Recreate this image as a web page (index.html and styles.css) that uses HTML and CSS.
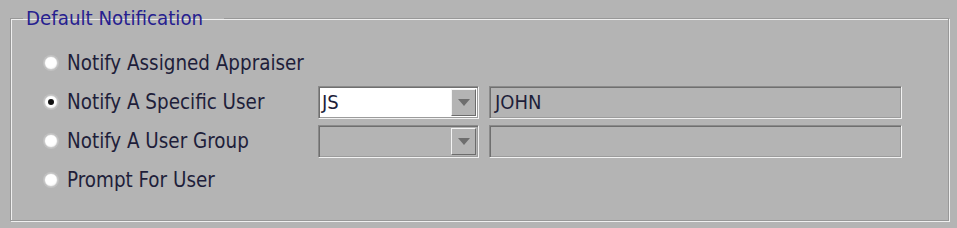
FILE: index.html
```html
<!DOCTYPE html>
<html lang="en">
<head>
    <meta charset="UTF-8">
    <title>Default Notification</title>
    <link rel="stylesheet" href="styles.css">
</head>
<body>
    <fieldset class="group">
        <legend>Default Notification</legend>
        <div class="rows">
            <label class="option">
                <span class="radio"></span>
                <span>Notify Assigned Appraiser</span>
            </label>
            <div></div>
            <div></div>

            <label class="option">
                <span class="radio checked"></span>
                <span>Notify A Specific User</span>
            </label>
            <div class="combo">
                <span class="combo-text">JS</span>
                <span class="combo-btn"><span class="arrow"></span></span>
            </div>
            <div class="field">JOHN</div>

            <label class="option">
                <span class="radio"></span>
                <span>Notify A User Group</span>
            </label>
            <div class="combo disabled">
                <span class="combo-text"></span>
                <span class="combo-btn"><span class="arrow"></span></span>
            </div>
            <div class="field"></div>

            <label class="option">
                <span class="radio"></span>
                <span>Prompt For User</span>
            </label>
            <div></div>
            <div></div>
        </div>
    </fieldset>
</body>
</html>
```

FILE: styles.css
```css
body {
    margin: 0;
    padding: 0;
    background: #b4b4b4;
    font-family: 'DejaVu Sans Condensed', 'DejaVu Sans', sans-serif;
    font-size: 20px;
    color: #1e1e3a;
    height: 228px;
    overflow: hidden;
}
.group {
    margin: 8px 8px 0 10px;
    padding: 16px 0 14px 0;
    height: 181px;
    border: 1px solid #989898;
    box-shadow: inset 1px 1px 0 #efefef, 1px 1px 0 #efefef;
}
.group legend {
    margin-left: 12px;
    padding: 0 21px 0 3px;
    color: #26208f;
    font-size: 20.3px;
    line-height: 20px;
}
.rows {
    display: grid;
    grid-template-columns: 264px 161px 413px;
    grid-auto-rows: 38px;
    row-gap: 1px;
    column-gap: 10px;
    align-items: center;
    padding-left: 33px;
}
.option {
    display: flex;
    align-items: center;
    gap: 9px;
    font-size: 20.4px;
}
.radio {
    width: 12px;
    height: 12px;
    border-radius: 50%;
    border: 1px solid #cfcfcf;
    background: radial-gradient(circle at 45% 40%, #ffffff 55%, #e4e4e4 100%);
    box-shadow: 0 0 0 1px #c2c2c2;
    position: relative;
}
.radio.checked::after {
    content: "";
    position: absolute;
    left: 3px;
    top: 3px;
    width: 6px;
    height: 6px;
    border-radius: 50%;
    background: #111;
}
.combo,
.field {
    box-sizing: border-box;
    height: 33px;
    border: 1px solid;
    border-color: #8a8a8a #f2f2f2 #f2f2f2 #8a8a8a;
    box-shadow: inset 1px 1px 0 #6f6f6f, inset -1px -1px 0 #9c9c9c;
}
.combo {
    display: flex;
    align-items: center;
    background: #ffffff;
    padding: 2px;
}
.combo.disabled {
    background: #b4b4b4;
}
.combo-text {
    flex: 1;
    padding-left: 1px;
}
.combo-btn {
    width: 25px;
    height: 27px;
    box-sizing: border-box;
    background: #b4b4b4;
    border: 1px solid;
    border-color: #f4f4f4 #6c6c6c #6c6c6c #f4f4f4;
    display: flex;
    align-items: center;
    justify-content: center;
}
.arrow {
    width: 0;
    height: 0;
    border-left: 6px solid transparent;
    border-right: 6px solid transparent;
    border-top: 7px solid #6e6e6e;
}
.field {
    display: flex;
    align-items: center;
    padding-left: 5px;
    background: #b4b4b4;
}
```
